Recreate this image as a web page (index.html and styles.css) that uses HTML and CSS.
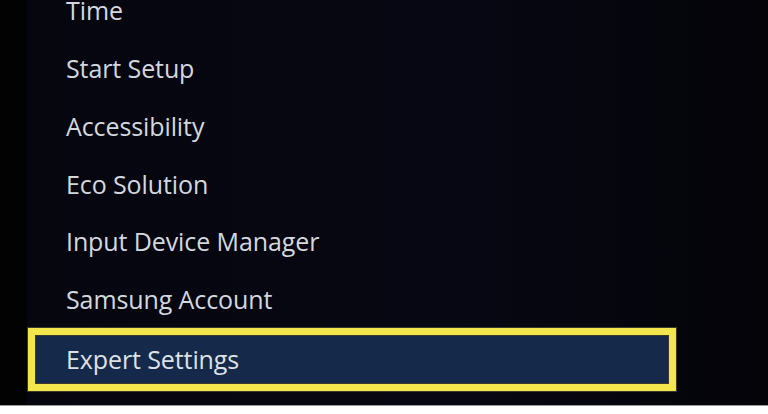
FILE: index.html
```html
<!DOCTYPE html>
<html lang="en">
<head>
<meta charset="utf-8">
<title>Settings - General</title>
<link rel="stylesheet" href="styles.css">
</head>
<body>
<div class="screen">
  <div class="edge"></div>
  <ul class="menu">
    <li class="item">Time</li>
    <li class="item">Start Setup</li>
    <li class="item">Accessibility</li>
    <li class="item">Eco Solution</li>
    <li class="item">Input Device Manager</li>
    <li class="item">Samsung Account</li>
    <li class="item selected">Expert Settings</li>
  </ul>
</div>
<div class="below"></div>
</body>
</html>
```

FILE: styles.css
```css
html, body {
  margin: 0;
  padding: 0;
  background: #ffffff;
}
body {
  width: 768px;
  height: 414px;
  overflow: hidden;
  font-family: "Open Sans", "Noto Sans", "Liberation Sans", sans-serif;
}
.screen {
  height: 405px;
  display: flex;
  overflow: hidden;
  background: linear-gradient(90deg, #05060e 0%, #060712 60%, #040409 100%);
  border-bottom: 1px solid #9a9a9a;
}
.edge {
  width: 27px;
  flex: none;
  background: #020203;
}
.menu {
  list-style: none;
  margin: -18.6px 0 0 0;
  padding: 0;
  width: 649px;
  display: flex;
  flex-direction: column;
}
.item {
  height: 57.8px;
  display: flex;
  align-items: center;
  padding-left: 39px;
  font-size: 25px;
  font-weight: 500;
  color: #d3d8df;
  letter-spacing: -0.1px;
  box-sizing: border-box;
}
.item.selected {
  height: 63px;
  margin: 0 0 0 1px;
  padding-left: 31px;
  padding-bottom: 1px;
  background: #15294a;
  border: 7px solid #f3e64d;
  box-shadow: inset 0 0 0 1px #3b3b2c, 0 0 0 1px #3b3b2c;
  color: #dde2e8;
}
.below {
  height: 8px;
  background: #ffffff;
}
```
